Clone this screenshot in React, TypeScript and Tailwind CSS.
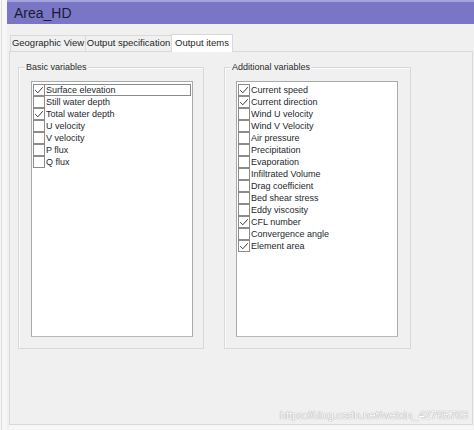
import { ReactNode } from "react";

const basic = [
  { label: "Surface elevation", on: true },
  { label: "Still water depth", on: false },
  { label: "Total water depth", on: true },
  { label: "U velocity", on: false },
  { label: "V velocity", on: false },
  { label: "P flux", on: false },
  { label: "Q flux", on: false },
];

const additional = [
  { label: "Current speed", on: true },
  { label: "Current direction", on: true },
  { label: "Wind U velocity", on: false },
  { label: "Wind V Velocity", on: false },
  { label: "Air pressure", on: false },
  { label: "Precipitation", on: false },
  { label: "Evaporation", on: false },
  { label: "Infiltrated Volume", on: false },
  { label: "Drag coefficient", on: false },
  { label: "Bed shear stress", on: false },
  { label: "Eddy viscosity", on: false },
  { label: "CFL number", on: true },
  { label: "Convergence angle", on: false },
  { label: "Element area", on: true },
];

function Check({ on }: { on: boolean }) {
  return (
    <div className="w-[12px] h-[12px] border border-[#8c8c8c] bg-white shrink-0 flex items-center justify-center">
      {on && (
        <svg width="10" height="10" viewBox="0 0 10 10">
          <path d="M1.2 5.2 L3.8 7.8 L8.8 2.2" fill="none" stroke="#3a3a3a" strokeWidth="1" />
        </svg>
      )}
    </div>
  );
}

function CheckList({ items, focused }: { items: { label: string; on: boolean }[]; focused?: boolean }) {
  return (
    <div className="w-[162px] h-[256px] bg-white border border-[#a9a9a9] border-b-[#b8b8b8] pt-[2px] pl-[1px] pr-[1px]">
      {items.map((it, i) => (
        <div key={it.label} className="h-[12px] flex items-center">
          <Check on={it.on} />
          <div
            className={
              "h-[12px] flex-1 flex items-center pl-[1px] text-[9px] text-[#231f2e] leading-none " +
              (focused && i === 0 ? "border border-[#8a8a8a] -ml-[1px]" : "")
            }
          >
            {it.label}
          </div>
        </div>
      ))}
    </div>
  );
}

function GroupBox({ title, children, width }: { title: string; children: ReactNode; width: string }) {
  return (
    <div className={"relative h-[282px] border border-[#d8d8d8] shadow-[inset_1px_1px_0_#fbfbfb] " + width}>
      <div className="absolute left-[6px] -top-[7px] px-[1px] bg-[#f0f0f0] text-[9px] leading-[12px] text-[#2b2b2b]">
        {title}
      </div>
      {children}
    </div>
  );
}

function Tab({ label, active, w }: { label: string; active?: boolean; w: string }) {
  return (
    <div
      className={
        "flex items-center justify-center text-[9.5px] text-[#1f1f1f] border border-b-0 " +
        w +
        (active
          ? " h-[18px] bg-white border-[#d9d9d9] -mb-[1px] relative z-10"
          : " h-[16px] bg-[#f0f0f0] border-[#dadada]")
      }
    >
      {label}
    </div>
  );
}

export default function App() {
  return (
    <div className="w-[474px] h-[430px] overflow-hidden bg-[#f7f7f7] flex font-['Liberation_Sans',Arial,sans-serif] relative">
      <div className="w-[7px] h-full flex">
        <div className="w-[1px]" />
        <div className="w-[1px] bg-[#dcdcdc]" />
      </div>
      <div className="flex-1 flex flex-col">
        <div className="h-[24px] bg-[#7a76c6] border-t-2 border-[#a7a4dc] flex items-center pl-[7px] shrink-0">
          <span className="text-[14px] text-[#1c1a33]">Area_HD</span>
        </div>
        <div className="flex-1 bg-[#f0f0f0] flex flex-col pl-[2px] pr-[1px]">
          <div className="h-[27px] flex items-end pl-[1px] shrink-0">
            <Tab label="Geographic View" w="w-[76px]" />
            <Tab label="Output specification" w="w-[87px] -ml-[1px]" />
            <Tab label="Output items" w="w-[62px] -ml-[1px]" active />
          </div>
          <div className="h-[374px] border border-[#d9d9d9] bg-[#f0f0f0] flex gap-[20px] pl-[8px] pt-[15px] shrink-0">
            <GroupBox title="Basic variables" width="w-[186px]">
              <div className="mt-[13px] ml-[12px]">
                <CheckList items={basic} focused />
              </div>
            </GroupBox>
            <GroupBox title="Additional variables" width="w-[187px]">
              <div className="mt-[13px] ml-[11px]">
                <CheckList items={additional} />
              </div>
            </GroupBox>
          </div>
          <div className="flex-1 bg-[#f7f7f7]" />
        </div>
      </div>
      <div className="absolute right-[6px] bottom-[6px] text-[11.5px] text-white tracking-[-0.2px] [text-shadow:0_0_1px_#9a9a9a,0_0_1px_#b0b0b0]">
        https://blog.csdn.net/weixin_42795763
      </div>
    </div>
  );
}
